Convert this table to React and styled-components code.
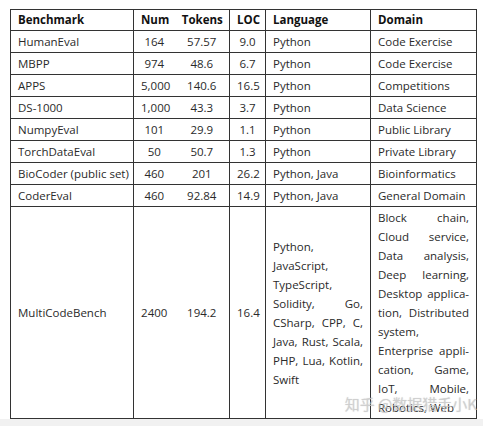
import React from 'react'
import styled, { createGlobalStyle } from 'styled-components'

const GlobalStyle = createGlobalStyle`
  html, body {
    margin: 0;
    padding: 0;
    background: #ffffff;
  }
  body {
    font-family: "Open Sans", "Noto Sans", "Noto Sans CJK SC", sans-serif;
  }
`

const Page = styled.div`
  position: relative;
  width: 483px;
  height: 426px;
  display: flex;
  flex-direction: column;
  overflow: hidden;
`

const TableArea = styled.div`
  padding: 9px 0 0 10px;
`

const Footer = styled.div`
  flex: 1;
  background: #f1f1f1;
`

const Table = styled.table`
  width: 466px;
  table-layout: fixed;
  border-collapse: collapse;
  font-size: 11.5px;
  line-height: 19px;
  color: #2a2a2a;
`

const Th = styled.th`
  border: 1px solid #333;
  padding: 0 6px 1px 7px;
  font-weight: 700;
  color: #111;
  text-align: ${p => p.$align || 'left'};
  white-space: nowrap;
  ${p => p.$joined && 'border-left-style: hidden;'}
`

const Td = styled.td`
  border: 1px solid #333;
  padding: 1px 7px 1px 7px;
  vertical-align: middle;
  text-align: ${p => p.$align || 'left'};
  white-space: nowrap;
  ${p => p.$joined && 'border-left-style: hidden;'}
`

const Line = styled.div`
  white-space: nowrap;
  text-align: ${p => (p.$justify ? 'justify' : 'left')};
  text-align-last: ${p => (p.$justify ? 'justify' : 'left')};
`

const Watermark = styled.div`
  position: absolute;
  right: 6px;
  bottom: 13px;
  font-family: "Noto Sans CJK SC", "Open Sans", sans-serif;
  font-size: 15px;
  line-height: 18px;
  color: rgba(205, 205, 205, 0.75);
  text-shadow: 0 0 1px rgba(120, 120, 120, 0.35);
  pointer-events: none;
`

const rows = [
  ['HumanEval', '164', '57.57', '9.0', 'Python', 'Code Exercise'],
  ['MBPP', '974', '48.6', '6.7', 'Python', 'Code Exercise'],
  ['APPS', '5,000', '140.6', '16.5', 'Python', 'Competitions'],
  ['DS-1000', '1,000', '43.3', '3.7', 'Python', 'Data Science'],
  ['NumpyEval', '101', '29.9', '1.1', 'Python', 'Public Library'],
  ['TorchDataEval', '50', '50.7', '1.3', 'Python', 'Private Library'],
  ['BioCoder (public set)', '460', '201', '26.2', 'Python, Java', 'Bioinformatics'],
  ['CoderEval', '460', '92.84', '14.9', 'Python, Java', 'General Domain'],
]

const languages = [
  ['Python,', false],
  ['JavaScript,', false],
  ['TypeScript,', false],
  ['Solidity, Go,', true],
  ['CSharp, CPP, C,', true],
  ['Java, Rust, Scala,', true],
  ['PHP, Lua, Kotlin,', true],
  ['Swift', false],
]

const domains = [
  ['Block chain,', true],
  ['Cloud service,', true],
  ['Data analysis,', true],
  ['Deep learning,', true],
  ['Desktop applica-', true],
  ['tion, Distributed', true],
  ['system,', false],
  ['Enterprise appli-', true],
  ['cation, Game,', true],
  ['IoT, Mobile,', true],
  ['Robotics, Web', false],
]

const App = () => {
  return (
    <Page>
      <GlobalStyle />
      <TableArea>
        <Table>
          <colgroup>
            <col style={{ width: 123 }} />
            <col style={{ width: 41 }} />
            <col style={{ width: 55 }} />
            <col style={{ width: 36 }} />
            <col style={{ width: 105 }} />
            <col style={{ width: 106 }} />
          </colgroup>
          <thead>
            <tr>
              <Th>Benchmark</Th>
              <Th $align='center'>Num</Th>
              <Th $align='center' $joined>Tokens</Th>
              <Th $align='center'>LOC</Th>
              <Th>Language</Th>
              <Th>Domain</Th>
            </tr>
          </thead>
          <tbody>
            {rows.map(r => (
              <tr key={r[0]}>
                <Td>{r[0]}</Td>
                <Td $align='center'>{r[1]}</Td>
                <Td $align='center' $joined>{r[2]}</Td>
                <Td $align='center'>{r[3]}</Td>
                <Td>{r[4]}</Td>
                <Td>{r[5]}</Td>
              </tr>
            ))}
            <tr>
              <Td>MultiCodeBench</Td>
              <Td $align='center'>2400</Td>
              <Td $align='center' $joined>194.2</Td>
              <Td $align='center'>16.4</Td>
              <Td>
                {languages.map(([t, j]) => (
                  <Line key={t} $justify={j}>{t}</Line>
                ))}
              </Td>
              <Td>
                {domains.map(([t, j]) => (
                  <Line key={t} $justify={j}>{t}</Line>
                ))}
              </Td>
            </tr>
          </tbody>
        </Table>
      </TableArea>
      <Footer />
      <Watermark>知乎 @数据猎手小K</Watermark>
    </Page>
  )
}

export default App
